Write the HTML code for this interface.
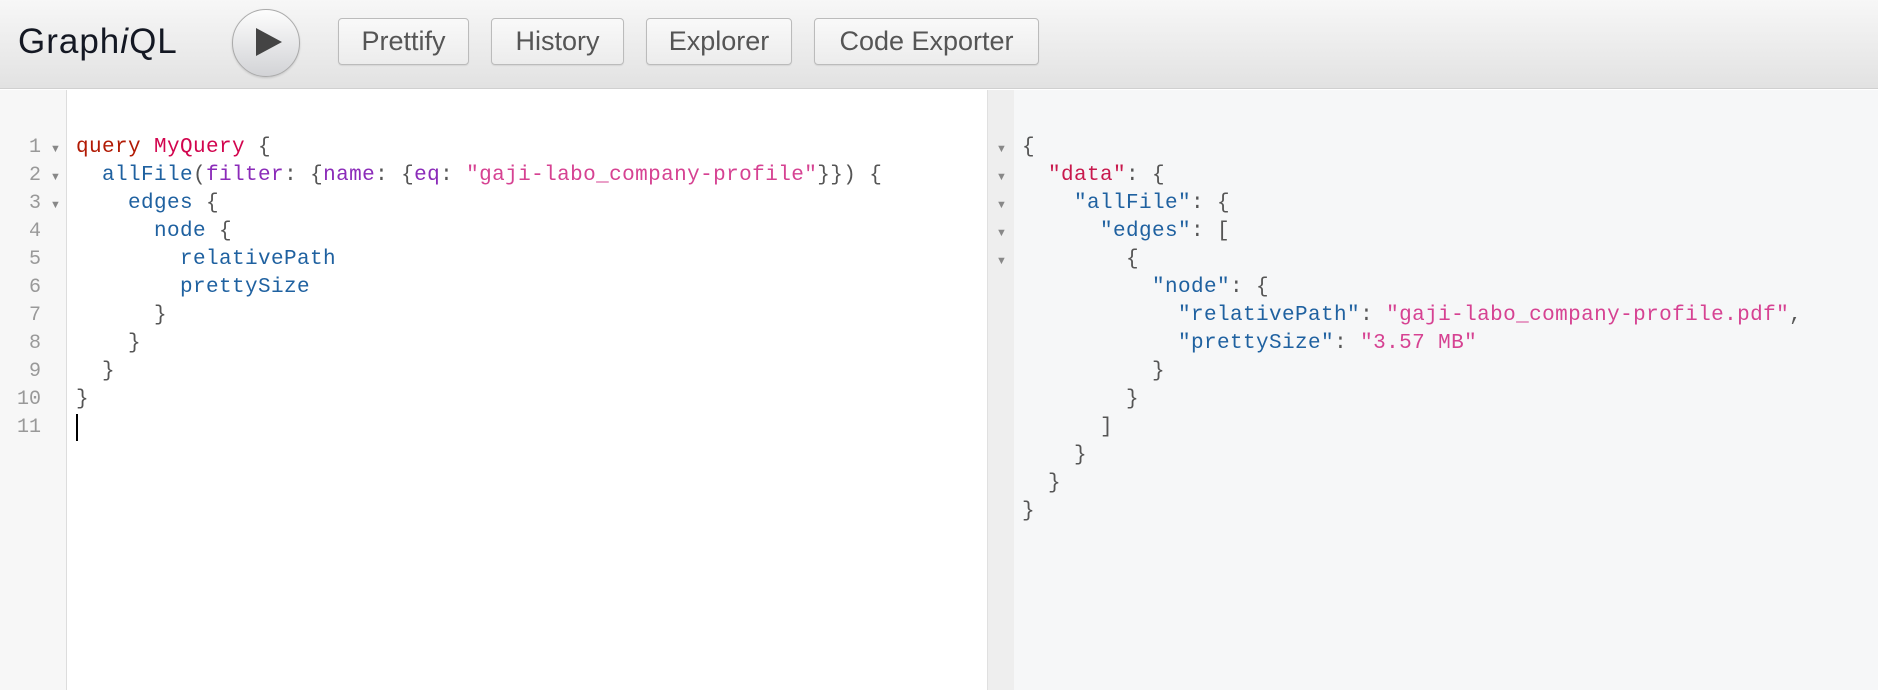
<!DOCTYPE html>
<html><head><meta charset="utf-8"><style>
*{margin:0;padding:0;box-sizing:border-box}
body{width:1878px;height:690px;overflow:hidden;background:#fff;font-family:"Liberation Sans",sans-serif;position:relative}
.hdr{position:absolute;left:0;top:0;width:1878px;height:89px;background:linear-gradient(#f7f7f7,#e2e2e2);border-bottom:1px solid #d0d0d0}
.title{position:absolute;left:18px;top:22px;font-size:35px;color:#141823;letter-spacing:1px}
.play{position:absolute;left:232px;top:9px;width:68px;height:68px;border-radius:50%;background:linear-gradient(#fdfdfd,#d2d3d6);border:1px solid #aaa;box-shadow:0 1px 2px rgba(0,0,0,.15)}
.play svg{position:absolute;left:23px;top:18px}
.btn{position:absolute;top:18px;height:47px;border:1px solid #bbb;border-radius:4px;background:linear-gradient(#f9f9f9,#ececec);box-shadow:0 1px 1px rgba(0,0,0,.08);font-size:27px;color:#555;text-align:center;line-height:45px}
.gut{position:absolute;left:0;top:90px;width:67px;height:600px;background:#f7f7f7;border-right:1px solid #ddd}
.rgut{position:absolute;left:987px;top:90px;width:27px;height:600px;background:#eeeeee;border-left:1px solid #e0e0e0}
.res{position:absolute;left:1014px;top:90px;width:864px;height:600px;background:#f6f7f8}
.code{position:absolute;font-family:"Liberation Mono",monospace;font-size:21px;letter-spacing:0.4px;line-height:28px;white-space:pre;color:#555}
.ln{position:absolute;left:0;width:41px;text-align:right;font-family:"Liberation Mono",monospace;font-size:20px;line-height:28px;color:#999}
.ar{position:absolute;font-size:11px;color:#888;line-height:28px}
.k{color:#b11a04}.d{color:#d2054e}.f{color:#1f61a0}.a{color:#8b2bb9}.s{color:#d64292}.r{color:#c8194d}
</style></head><body>
<div class="hdr">
<div class="title">Graph<i>i</i>QL</div>
<div class="play"><svg width="26" height="28" viewBox="0 0 26 28"><path d="M0 0L26 14L0 28Z" fill="#444"/></svg></div>
<div class="btn" style="left:338px;width:131px">Prettify</div>
<div class="btn" style="left:491px;width:133px">History</div>
<div class="btn" style="left:646px;width:146px">Explorer</div>
<div class="btn" style="left:814px;width:225px">Code Exporter</div>
</div>
<div class="gut"></div>
<div class="rgut"></div>
<div class="res"></div>
<div style="position:absolute;left:0;top:134px">
<div class="ln" style="top:0">1</div><div class="ln" style="top:28px">2</div><div class="ln" style="top:56px">3</div><div class="ln" style="top:84px">4</div><div class="ln" style="top:112px">5</div><div class="ln" style="top:140px">6</div><div class="ln" style="top:168px">7</div><div class="ln" style="top:196px">8</div><div class="ln" style="top:224px">9</div><div class="ln" style="top:252px">10</div><div class="ln" style="top:280px">11</div>
<div class="ar" style="left:50px;top:1px">▼</div><div class="ar" style="left:50px;top:29px">▼</div><div class="ar" style="left:50px;top:57px">▼</div>
</div>
<div class="code" style="left:76px;top:134px"><span class="k">query</span> <span class="d">MyQuery</span> {
  <span class="f">allFile</span>(<span class="a">filter</span>: {<span class="a">name</span>: {<span class="a">eq</span>: <span class="s">"gaji-labo_company-profile"</span>}}) {
    <span class="f">edges</span> {
      <span class="f">node</span> {
        <span class="f">relativePath</span>
        <span class="f">prettySize</span>
      }
    }
  }
}
</div>
<div style="position:absolute;left:76px;top:414px;width:2px;height:27px;background:#000"></div>
<div style="position:absolute;left:0;top:134px">
<div class="ar" style="left:996px;top:1px">▼</div><div class="ar" style="left:996px;top:29px">▼</div><div class="ar" style="left:996px;top:57px">▼</div><div class="ar" style="left:996px;top:85px">▼</div><div class="ar" style="left:996px;top:113px">▼</div>
</div>
<div class="code" style="left:1022px;top:134px">{
  <span class="r">"data"</span>: {
    <span class="f">"allFile"</span>: {
      <span class="f">"edges"</span>: [
        {
          <span class="f">"node"</span>: {
            <span class="f">"relativePath"</span>: <span class="s">"gaji-labo_company-profile.pdf"</span>,
            <span class="f">"prettySize"</span>: <span class="s">"3.57 MB"</span>
          }
        }
      ]
    }
  }
}</div>
</body></html>
